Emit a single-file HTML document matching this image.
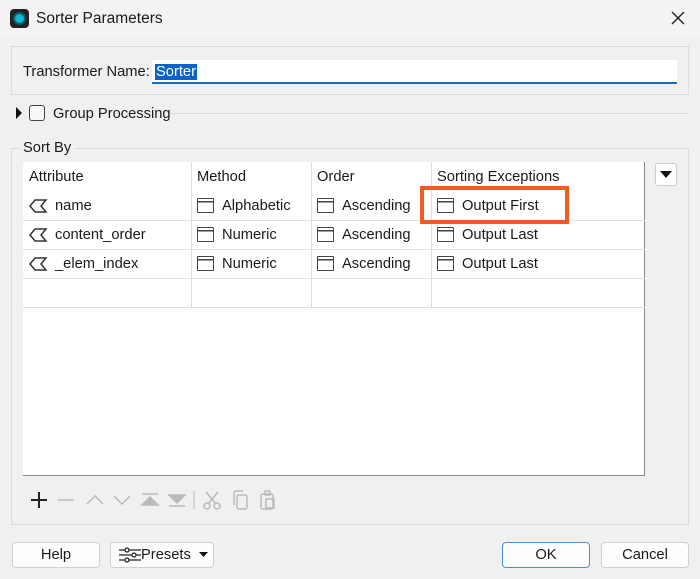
<!DOCTYPE html>
<html><head><style>
*{box-sizing:border-box;margin:0;padding:0}
body{width:700px;height:579px;background:#f0f0f0;font-family:"Liberation Sans",sans-serif;font-size:14.7px;color:#1a1a1a;position:relative;overflow:hidden}
.a{position:absolute}
.title{left:0;top:0;width:700px;height:38px;background:#f3f2f5}
.grp{border:1px solid #dcdcdc}
.btn{position:absolute;background:#fdfdfd;border:1px solid #d0d0d0;border-radius:4px;text-align:center;line-height:24px;font-size:14.7px}
.cell{position:absolute;height:29px;line-height:29px;font-size:14.7px;white-space:nowrap}
.hl{position:absolute;height:1px;background:#e2e2e2;left:23px;width:622px}
.vl{position:absolute;width:1px;background:#dcdcdc;top:162px;height:146px}
.ic{display:inline-block;width:17px;height:15px;border:1.5px solid #444;vertical-align:-3px;margin-right:8px;border-radius:1px;box-shadow:inset 0 2px 0 #fff,inset 0 3.5px 0 #444}
</style></head><body>
<div class="a title"></div>
<div class="a" style="left:10px;top:9px;width:19px;height:19px;background:#222;border-radius:4px"></div>
<div class="a" style="left:13px;top:12px;width:13px;height:13px;border-radius:50%;background:#12b5d8;border:2px solid #0a5c70"></div>
<div class="a" style="left:36px;top:10px;font-size:15.5px">Sorter Parameters</div>
<svg class="a" style="left:670px;top:10px" width="16" height="16"><path d="M2 2L14 14M14 2L2 14" stroke="#222" stroke-width="1.4"/></svg>

<div class="a grp" style="left:11px;top:46px;width:678px;height:49px"></div>
<div class="a" style="left:23px;top:64px">Transformer Name:</div>
<div class="a" style="left:152px;top:60px;width:525px;height:24px;background:#fff;border-bottom:2px solid #1a6ec0"></div>
<div class="a" style="left:155px;top:64px;background:#0a64c8;color:#fff;padding:0 1px">Sorter</div>

<svg class="a" style="left:15px;top:106px" width="8" height="14"><path d="M1 1L7 7L1 13Z" fill="#111"/></svg>
<div class="a" style="left:29px;top:105px;width:16px;height:16px;border:1px solid #444;border-radius:3px;background:#f8f8f8"></div>
<div class="a" style="left:53px;top:106px">Group Processing</div>
<div class="a" style="left:170px;top:113px;width:519px;height:1px;background:#dcdcdc"></div>

<div class="a grp" style="left:11px;top:148px;width:678px;height:377px"></div>
<div class="a" style="left:20px;top:140px;background:#f0f0f0;padding:0 3px">Sort By</div>

<div class="a" style="left:23px;top:162px;width:622px;height:314px;background:#fff;border-right:1px solid #888;border-bottom:1px solid #888"></div>
<div class="vl" style="left:191px"></div><div class="vl" style="left:311px"></div><div class="vl" style="left:431px"></div>
<div class="hl" style="top:220px"></div><div class="hl" style="top:249px"></div><div class="hl" style="top:278px"></div><div class="hl" style="top:307px"></div>

<div class="cell" style="left:29px;top:163px">Attribute</div>
<div class="cell" style="left:197px;top:163px">Method</div>
<div class="cell" style="left:317px;top:163px">Order</div>
<div class="cell" style="left:437px;top:163px">Sorting Exceptions</div>

<svg class="a" style="left:28px;top:198px" width="20" height="16"><path d="M7 2H18L13 8L18 14H7L2 8Z" fill="none" stroke="#333" stroke-width="1.5"/></svg>
<svg class="a" style="left:28px;top:227px" width="20" height="16"><path d="M7 2H18L13 8L18 14H7L2 8Z" fill="none" stroke="#333" stroke-width="1.5"/></svg>
<svg class="a" style="left:28px;top:256px" width="20" height="16"><path d="M7 2H18L13 8L18 14H7L2 8Z" fill="none" stroke="#333" stroke-width="1.5"/></svg>
<div class="cell" style="left:55px;top:192px">name</div>
<div class="cell" style="left:55px;top:221px">content_order</div>
<div class="cell" style="left:55px;top:250px">_elem_index</div>

<div class="cell" style="left:197px;top:192px"><span class="ic"></span>Alphabetic</div>
<div class="cell" style="left:197px;top:221px"><span class="ic"></span>Numeric</div>
<div class="cell" style="left:197px;top:250px"><span class="ic"></span>Numeric</div>
<div class="cell" style="left:317px;top:192px"><span class="ic"></span>Ascending</div>
<div class="cell" style="left:317px;top:221px"><span class="ic"></span>Ascending</div>
<div class="cell" style="left:317px;top:250px"><span class="ic"></span>Ascending</div>
<div class="cell" style="left:437px;top:192px"><span class="ic"></span>Output First</div>
<div class="cell" style="left:437px;top:221px"><span class="ic"></span>Output Last</div>
<div class="cell" style="left:437px;top:250px"><span class="ic"></span>Output Last</div>
<div class="a" style="left:420px;top:186px;width:149px;height:38px;border:4px solid #f15a22"></div>

<div class="a" style="left:655px;top:163px;width:22px;height:23px;background:#fff;border:1px solid #ccc;border-radius:3px"></div>
<svg class="a" style="left:660px;top:171px" width="12" height="8"><path d="M0 0H12L6 7Z" fill="#111"/></svg>

<svg class="a" style="left:28px;top:488px" width="260" height="24" fill="none" stroke-width="1.5">
<path d="M3 12H19M11 4V20" stroke="#222" stroke-width="2"/>
<path d="M30 12H46" stroke="#bbb"/>
<path d="M59 16L67 8L75 16" stroke="#bbb"/>
<path d="M86 8L94 16L102 8" stroke="#bbb"/>
<path d="M114 6H130M114 17H130L122 9Z" stroke="#bbb" fill="#bbb"/>
<path d="M141 18H157M141 7H157L149 15Z" stroke="#bbb" fill="#bbb"/>
<path d="M166 3V21" stroke="#ccc"/>
<path d="M178 4L188 16M190 4L180 16" stroke="#bbb"/><circle cx="179" cy="18" r="3" stroke="#bbb"/><circle cx="189" cy="18" r="3" stroke="#bbb"/>
<rect x="209" y="7" width="10" height="14" rx="2" stroke="#bbb"/><path d="M206 17V5a2 2 0 0 1 2-2h7" stroke="#bbb"/>
<rect x="233" y="6" width="12" height="15" rx="2" stroke="#bbb"/><rect x="237" y="3" width="5" height="4" stroke="#bbb"/><rect x="238" y="11" width="8" height="9" stroke="#bbb"/>
</svg>

<div class="btn" style="left:12px;top:542px;width:88px;height:26px">Help</div>
<div class="btn" style="left:110px;top:542px;width:104px;height:26px;text-align:left;padding-left:30px">Presets</div>
<svg class="a" style="left:119px;top:547px" width="22" height="16" stroke="#222" stroke-width="1.3" fill="#fff"><path d="M0 3H22M0 8H22M0 13H22"/><circle cx="8" cy="3" r="2"/><circle cx="15" cy="8" r="2"/><circle cx="8" cy="13" r="2"/></svg>
<svg class="a" style="left:199px;top:552px" width="9" height="6"><path d="M0 0H9L4.5 5Z" fill="#111"/></svg>
<div class="btn" style="left:502px;top:542px;width:88px;height:26px;border-color:#4a90d9">OK</div>
<div class="btn" style="left:601px;top:542px;width:88px;height:26px">Cancel</div>
</body></html>
